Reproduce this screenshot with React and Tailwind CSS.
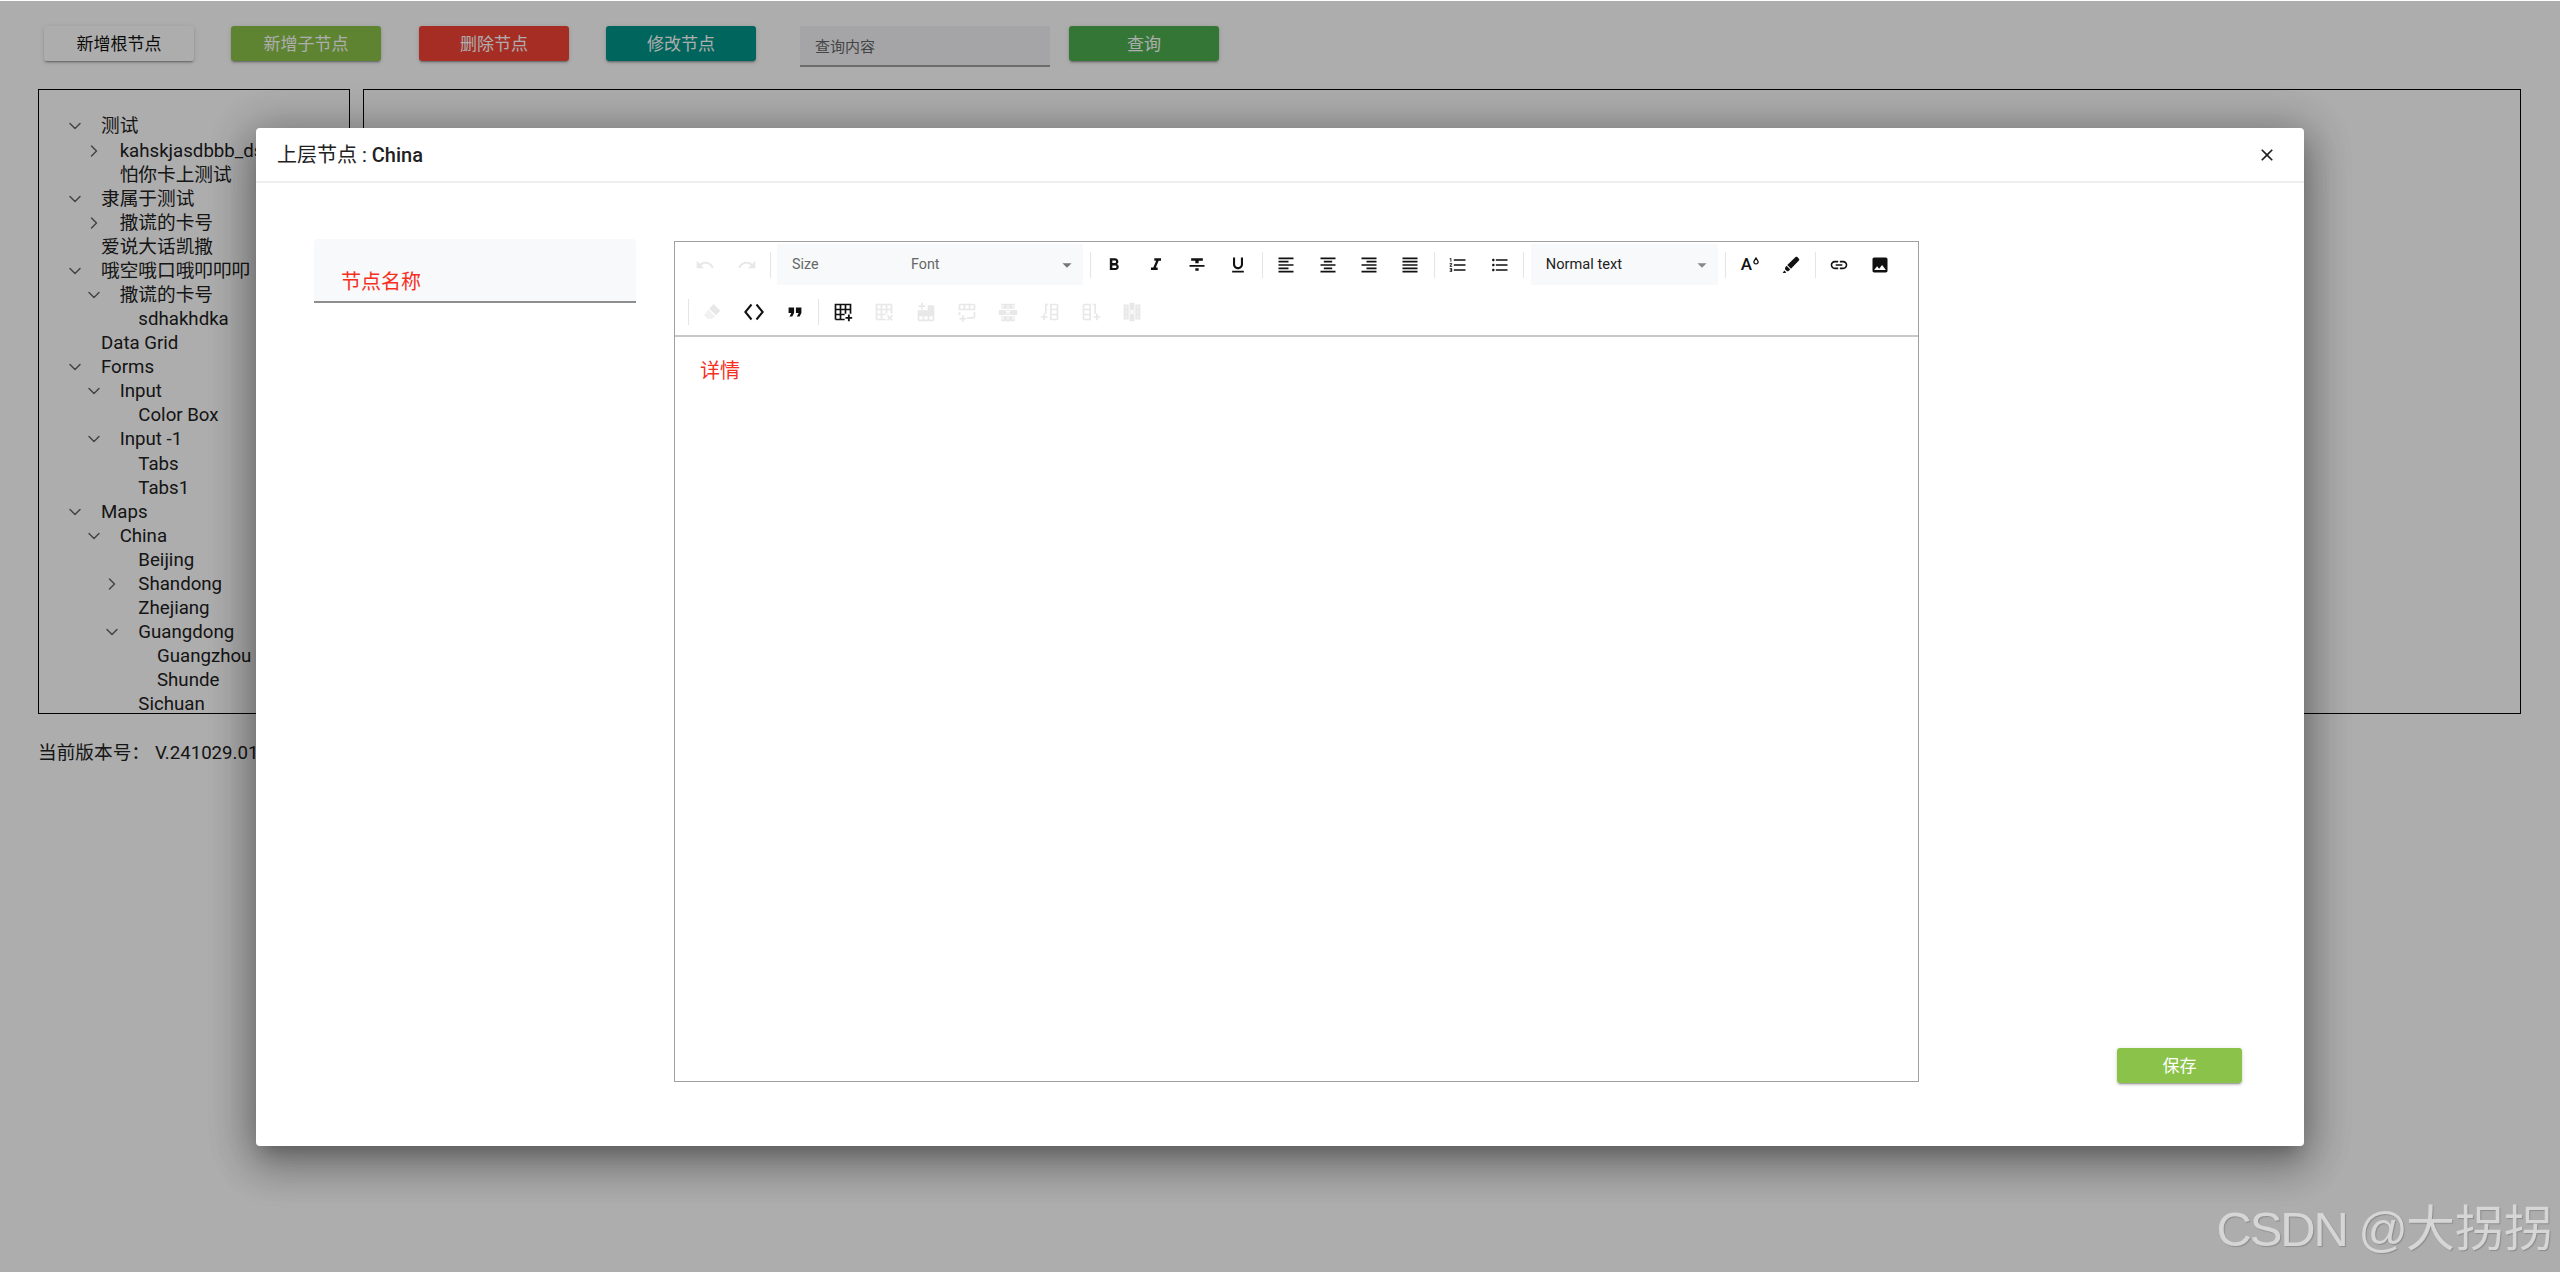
import { ChevronDown, ChevronRight } from 'lucide-react';
import {
  MdClose, MdUndo, MdRedo, MdFormatBold, MdFormatItalic, MdFormatStrikethrough, MdFormatUnderlined,
  MdFormatAlignLeft, MdFormatAlignCenter, MdFormatAlignRight, MdFormatAlignJustify,
  MdFormatListNumbered, MdFormatListBulleted, MdLink, MdImage, MdFormatQuote, MdArrowDropDown,
} from 'react-icons/md';

const INDENT = ['pl-[24px]', 'pl-[42.67px]', 'pl-[61.33px]', 'pl-[80px]'];

// [label, depth, arrow]  arrow: d = open, r = closed, none = leaf
const TREE = [
  ['测试', 0, 'd'],
  ['kahskjasdbbb_ds', 1, 'r'],
  ['怕你卡上测试', 1],
  ['隶属于测试', 0, 'd'],
  ['撒谎的卡号', 1, 'r'],
  ['爱说大话凯撒', 0],
  ['哦空哦口哦叩叩叩', 0, 'd'],
  ['撒谎的卡号', 1, 'd'],
  ['sdhakhdka', 2],
  ['Data Grid', 0],
  ['Forms', 0, 'd'],
  ['Input', 1, 'd'],
  ['Color Box', 2],
  ['Input -1', 1, 'd'],
  ['Tabs', 2],
  ['Tabs1', 2],
  ['Maps', 0, 'd'],
  ['China', 1, 'd'],
  ['Beijing', 2],
  ['Shandong', 2, 'r'],
  ['Zhejiang', 2],
  ['Guangdong', 2, 'd'],
  ['Guangzhou', 3],
  ['Shunde', 3],
  ['Sichuan', 2],
];

function TreeRow({ label, depth, arrow }) {
  return (
    <div className={`flex h-[24.08px] items-center whitespace-nowrap ${INDENT[depth]}`}>
      <span className="mr-[14px] flex w-[24px] shrink-0 justify-center text-[#666]">
        {arrow === 'd' && <ChevronDown size={20} strokeWidth={1.8} />}
        {arrow === 'r' && <ChevronRight size={20} strokeWidth={1.8} />}
      </span>
      <span>{label}</span>
    </div>
  );
}

const RAISED = 'shadow-[0_3px_1px_-2px_rgba(0,0,0,.2),0_2px_2px_0_rgba(0,0,0,.14),0_1px_5px_0_rgba(0,0,0,.12)]';

function Btn({ className, children }) {
  return (
    <button type="button" className={`flex h-[35px] w-[150px] items-center justify-center rounded-[3px] pt-[2px] text-[17px] ${RAISED} ${className}`}>
      {children}
    </button>
  );
}

function Divider() {
  return <span className="mx-[2.8px] h-[26px] w-px shrink-0 bg-[#e5e5e5]" />;
}

function Tool({ children, off }) {
  return (
    <span className={`flex h-full w-[41.35px] shrink-0 items-center justify-center ${off ? 'text-[#e8e8e8]' : 'text-[#111]'}`}>
      {children}
    </span>
  );
}

function EraserIcon() {
  return (
    <svg width="20" height="20" viewBox="0 0 24 24" fill="currentColor">
      <path d="M14 2.5 22 10.5 16.6 16 8.5 8z" />
      <path d="M7.3 9.2 15.4 17.2 12 20.5H7L2.5 16z" fill="#f1f1f1" />
    </svg>
  );
}

function MarkerIcon() {
  return (
    <svg width="20" height="20" viewBox="0 0 24 24" fill="currentColor">
      <path d="M17.5 2.5c.6-.6 1.5-.6 2.1 0l1.9 1.9c.6.6.6 1.5 0 2.1L12 16.5 7.5 12z" />
      <path d="M6.7 13 11 17.3 8.6 19.5H7.2L4.8 17v-1.6z" />
      <path d="M4 18.5 6.2 20.7 5.2 21.7H2z" />
    </svg>
  );
}

function CodeIcon() {
  return (
    <svg width="20" height="20" viewBox="0 0 24 24" fill="none" stroke="currentColor" strokeWidth="2.4">
      <path d="M9 3 1.6 12 9 21M15 3l7.4 9L15 21" />
    </svg>
  );
}

function FontColorIcon() {
  return (
    <span className="relative flex h-[20px] w-[20px] items-center">
      <span className="ml-[1px] text-[17px] leading-none font-medium">A</span>
      <svg className="absolute top-[2px] right-[1px]" width="6" height="8" viewBox="0 0 6 8" fill="none" stroke="currentColor" strokeWidth="1.3">
        <path d="M3 1 5 4.2a2.1 2.1 0 1 1-4 0z" />
      </svg>
    </span>
  );
}

// table icons: same 24 box, grid drawn in strokes or solid blocks
function TableIcon({ children }) {
  return (
    <svg width="20" height="20" viewBox="0 0 24 24" fill="currentColor" stroke="none">
      {children}
    </svg>
  );
}

const TABLE_ICONS = [
  <TableIcon key="t0">
    <path d="M3 21V3h18v11M3 9h18M3 15h11M9 3v18M15 3v11M3 21h11" fill="none" stroke="currentColor" strokeWidth="2" />
    <path d="M19 15v8M15 19h8" fill="none" stroke="currentColor" strokeWidth="2.2" />
  </TableIcon>,
  <TableIcon key="t1">
    <path d="M3 21V3h18v11M3 9h18M3 15h11M9 3v18M15 3v11M3 21h11" fill="none" stroke="currentColor" strokeWidth="2" />
    <path d="m16 16 6 6M22 16l-6 6" fill="none" stroke="currentColor" strokeWidth="2" />
  </TableIcon>,
  <TableIcon key="t2">
    <path d="M7 1v8M3 5h8" fill="none" stroke="currentColor" strokeWidth="2" />
    <path d="M14 4h6a2 2 0 0 1 2 2v15a2 2 0 0 1-2 2H4a2 2 0 0 1-2-2V10h20v0H14zM4 17v4h4v-4zm6 0v4h4v-4zm6 0v4h4v-4z" fillRule="evenodd" />
  </TableIcon>,
  <TableIcon key="t3">
    <path d="M4 2h16a2 2 0 0 1 2 2v6H2V4a2 2 0 0 1 2-2zm0 2v4h4V4zm6 0v4h4V4zm6 0v4h4V4z" fillRule="evenodd" />
    <path d="M3 12v4M21 12v5a2 2 0 0 1-2 2h-7M7 16v8M3 20h8" fill="none" stroke="currentColor" strokeWidth="2" />
  </TableIcon>,
  <TableIcon key="t4">
    <path d="M4 2h16v6H4zM1 9.5h22v6H1zM4 17h16v6H4z" />
    <path d="M6 4v3M12 4v3M18 4v3M6 18v3M12 18v3M18 18v3M9.5 10.5l5 4M14.5 10.5l-5 4" fill="none" stroke="#fff" strokeWidth="1.4" />
  </TableIcon>,
  <TableIcon key="t5">
    <path d="M12 2h8a2 2 0 0 1 2 2v16a2 2 0 0 1-2 2h-8zm2 2v4h6V4zm0 6v4h6v-4zm0 6v4h6v-4z" fillRule="evenodd" />
    <path d="M10 3H7v11M5 14v8M1 18h8" fill="none" stroke="currentColor" strokeWidth="2" />
  </TableIcon>,
  <TableIcon key="t6">
    <path d="M4 2h8v20H4a2 2 0 0 1-2-2V4a2 2 0 0 1 2-2zm0 2v4h6V4zm0 6v4h6v-4zm0 6v4h6v-4z" fillRule="evenodd" />
    <path d="M14 3h3v11M19 14v8M15 18h8" fill="none" stroke="currentColor" strokeWidth="2" />
  </TableIcon>,
  <TableIcon key="t7">
    <path d="M2 3h6v18H2zM16 3h6v18h-6zM9 1h6v22H9z" />
    <path d="M4 6h2M4 12h2M4 18h2M18 6h2M18 12h2M18 18h2M10 9.5l4 5M14 9.5l-4 5" fill="none" stroke="#fff" strokeWidth="1.4" />
  </TableIcon>,
];

function Editor() {
  return (
    <div className="ml-[38px] flex h-[841px] w-[1245px] shrink-0 flex-col border border-[#a0a0a0]">
      <div className="flex shrink-0 flex-col gap-[6.5px] border-b-2 border-[#c8c8c8] pt-[2px] pb-[2.5px]">
        <div className="flex h-[41px] items-center pl-[9.5px]">
          <Tool off><MdUndo size={20} /></Tool>
          <Tool off><MdRedo size={20} /></Tool>
          <Divider />
          <div className="mr-[4.2px] ml-[3.2px] flex h-full w-[306px] shrink-0 items-center bg-[#f8f9fa] pt-[1px] text-[14.3px] text-[#666]">
            <span className="ml-[15px] w-[119px]">Size</span>
            <span>Font</span>
            <MdArrowDropDown size={22} className="ml-auto mr-[5px] text-[#777]" />
          </div>
          <Divider />
          <Tool><MdFormatBold size={20} /></Tool>
          <Tool><MdFormatItalic size={20} /></Tool>
          <Tool><MdFormatStrikethrough size={20} /></Tool>
          <Tool><MdFormatUnderlined size={20} /></Tool>
          <Divider />
          <Tool><MdFormatAlignLeft size={20} /></Tool>
          <Tool><MdFormatAlignCenter size={20} /></Tool>
          <Tool><MdFormatAlignRight size={20} /></Tool>
          <Tool><MdFormatAlignJustify size={20} /></Tool>
          <Divider />
          <Tool><MdFormatListNumbered size={20} /></Tool>
          <Tool><MdFormatListBulleted size={20} /></Tool>
          <Divider />
          <div className="mr-[4.7px] ml-[3.9px] flex h-full w-[187px] shrink-0 items-center bg-[#f8f9fa] pt-[1px] text-[14.6px] text-[#222]">
            <span className="ml-[15px]">Normal text</span>
            <MdArrowDropDown size={22} className="ml-auto mr-[5px] text-[#888]" />
          </div>
          <Divider />
          <Tool><FontColorIcon /></Tool>
          <Tool><MarkerIcon /></Tool>
          <Divider />
          <Tool><MdLink size={20} /></Tool>
          <Tool><MdImage size={20} /></Tool>
        </div>
        <div className="flex h-[41px] items-center pl-[10px]">
          <Divider />
          <Tool off><EraserIcon /></Tool>
          <Tool><CodeIcon /></Tool>
          <Tool><MdFormatQuote size={22} /></Tool>
          <Divider />
          {TABLE_ICONS.map((icon, i) => (
            <Tool key={i} off={i > 0}>{icon}</Tool>
          ))}
        </div>
      </div>
      <div className="flex-1 pt-[21.5px] pl-[25px] text-[20px] leading-[24px] text-[#f5301f]">详情</div>
    </div>
  );
}

function Dialog() {
  return (
    <div className="absolute top-[128px] left-[256px] z-20 h-[1018px] w-[2048px] rounded-[4px] bg-white text-[#212121] shadow-[0_11px_15px_-7px_rgba(0,0,0,.2),0_24px_38px_3px_rgba(0,0,0,.14),0_9px_46px_8px_rgba(0,0,0,.12),0_4px_44px_6px_rgba(0,0,0,.2)]">
      <div className="flex h-[55px] items-center justify-between border-b-2 border-[#eeeeee] pr-[27px] pl-[21px]">
        <div className="text-[20px]">
          <span>上层节点 : </span>
          <span className="font-medium">China</span>
        </div>
        <MdClose size={20} />
      </div>
      <div className="mt-[58px] flex h-[842px] pr-[62px] pl-[58px]">
        <div className="-mt-[2px] flex h-[64px] w-[322px] shrink-0 items-end rounded-t-[4px] border-b-2 border-[#8e8e8e] bg-[#f8f9fa] pb-[5px] pl-[27px] text-[20px] leading-[28px] text-[#f5301f]">
          节点名称
        </div>
        <Editor />
        <button type="button" className={`ml-auto flex h-[35px] w-[125px] items-center justify-center self-end rounded-[3px] bg-[#8bc34a] pt-[2px] text-[17px] text-white ${RAISED}`}>
          保存
        </button>
      </div>
    </div>
  );
}

export default function App() {
  return (
    <div className="relative h-[1272px] w-[2560px] overflow-hidden bg-white font-[Roboto,'Noto_Sans_CJK_SC',sans-serif] text-[18.67px] text-[#212121]">
      <div className="flex items-start pt-[26px] pl-[44px]">
        <Btn className="bg-white text-[#111]">新增根节点</Btn>
        <Btn className="ml-[37px] bg-[#8bc34a] text-white">新增子节点</Btn>
        <Btn className="ml-[38px] bg-[#f44336] text-white">删除节点</Btn>
        <Btn className="ml-[37px] bg-[#009688] text-white">修改节点</Btn>
        <div className="ml-[44px] flex h-[41px] w-[250px] items-center border-b-2 border-[#a0a0a0] bg-[#f3f4f6] pt-[3px] pl-[15px] text-[15px] text-[#666]">
          查询内容
        </div>
        <Btn className="ml-[19px] bg-[#4caf50] text-white">查询</Btn>
      </div>

      <div className="mt-[22px] flex gap-[13px] pl-[38px]">
        <div className="h-[625px] w-[312px] shrink-0 overflow-hidden border border-black pt-[24.4px]">
          {TREE.map(([label, depth, arrow], i) => (
            <TreeRow key={i} label={label} depth={depth} arrow={arrow} />
          ))}
        </div>
        <div className="h-[625px] w-[2158px] shrink-0 border border-black" />
      </div>

      <div className="mt-[27px] flex pl-[38px] leading-[24px] whitespace-nowrap">
        <span>当前版本号：</span>
        <span className="ml-[5px]">V.241029.01</span>
      </div>

      <div className="absolute inset-x-0 top-px bottom-0 z-10 bg-black/32" />
      <Dialog />

      <div className="absolute right-[7px] bottom-[18px] z-30 flex items-baseline font-['Liberation_Sans','Noto_Sans_CJK_SC',sans-serif] text-[49px] leading-none text-[#d6d6d6] [text-shadow:1px_1px_1px_#8c8c8c]">
        <span className="tracking-[-2.1px]">CSDN @</span>
        <span>大拐拐</span>
      </div>
    </div>
  );
}
